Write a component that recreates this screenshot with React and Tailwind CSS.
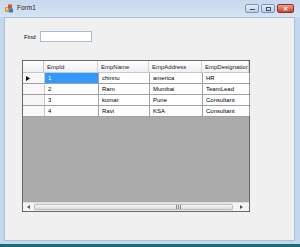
import React from "react";

const cols = [
  { name: "EmpId", w: "w-[54px]" },
  { name: "EmpName", w: "w-[51px]" },
  { name: "EmpAddress", w: "w-[53px]" },
  { name: "EmpDesignation", w: "w-[47px]" },
];

const rows = [
  ["1", "chinnu", "america", "HR"],
  ["2", "Ram", "Mumbai", "TeamLead"],
  ["3", "kumar", "Pune", "Consultant"],
  ["4", "Ravi", "KSA", "Consultant"],
];

function TitleIcon() {
  return (
    <svg width="9" height="9" viewBox="0 0 9 9">
      <rect x="0" y="3" width="4" height="5" fill="#d9a03a" />
      <rect x="3" y="0.5" width="4" height="4" fill="#e24c2f" />
      <rect x="4" y="4.5" width="4" height="4" fill="#3a78c9" />
      <rect x="1" y="4" width="2" height="2" fill="#f3d27a" />
    </svg>
  );
}

export default function App() {
  return (
    <div
      className="w-[300px] h-[247px] flex flex-col bg-[#c3d7ee] overflow-hidden"
      style={{ fontFamily: '"Liberation Sans", Arial, sans-serif' }}
    >
      {/* Title bar */}
      <div className="h-[17px] flex items-start bg-gradient-to-b from-[#c7d9ee] to-[#d5e3f3]">
        <div className="flex items-center gap-[3px] pl-[5px] pt-[4px]">
          <TitleIcon />
          <span className="text-[6.5px] text-[#1e1e1e] leading-none">Form1</span>
        </div>
        <div className="flex-1" />
        <div className="flex gap-[2px] pt-[4px] pr-[6px]">
          <div className="w-[14px] h-[9px] rounded-[2px] border border-[#7d94b3] bg-gradient-to-b from-[#e6eef8] to-[#b9cbe3] flex items-end justify-center pb-[2px]">
            <div className="w-[5px] h-[1.5px] bg-[#3b4f6b]" />
          </div>
          <div className="w-[14px] h-[9px] rounded-[2px] border border-[#7d94b3] bg-gradient-to-b from-[#e6eef8] to-[#b9cbe3] flex items-center justify-center">
            <div className="w-[5px] h-[4px] border border-[#3b4f6b]" />
          </div>
          <div className="w-[17px] h-[9px] rounded-[2px] border border-[#8a3028] bg-gradient-to-b from-[#e9a08f] to-[#c9412c] flex items-center justify-center text-white text-[6px] font-bold leading-none">
            ✕
          </div>
        </div>
      </div>

      {/* Frame body */}
      <div className="flex-1 flex pl-[4px] pr-[5px] pb-[3px]">
        <div className="flex-1 bg-[#f0f0f0] border border-[#aebfd6] flex flex-col pl-[17px] pt-[13px]">
          {/* Find row */}
          <div className="flex items-center h-[11px]">
            <span className="text-[6px] text-black leading-none ml-[2px] w-[16px]">Find</span>
            <div className="w-[52px] h-[11px] bg-white border border-[#a9bcd3]" />
          </div>

          {/* Grid */}
          <div className="mt-[18px] w-[228px] h-[152px] border border-[#696969] bg-[#ababab] flex flex-col">
            {/* Header */}
            <div className="flex h-[12px] bg-gradient-to-b from-[#ffffff] to-[#eef0f3] border-b border-[#c8c8c8]">
              <div className="w-[22px] border-r border-[#c8c8c8]" />
              {cols.map((c) => (
                <div
                  key={c.name}
                  className={`${c.w} shrink-0 border-r border-[#d5d5d5] flex items-center pl-[3px] text-[6px] text-[#1a1a1a] leading-none whitespace-nowrap overflow-hidden`}
                >
                  {c.name}
                </div>
              ))}
            </div>
            {/* Rows */}
            {rows.map((r, i) => (
              <div key={i} className="flex h-[11px] bg-white border-b border-[#a0a0a0]">
                <div className="w-[22px] shrink-0 bg-[#f7f7f7] border-r border-[#c8c8c8] flex items-center pl-[3px]">
                  {i === 0 && (
                    <svg width="4" height="5" viewBox="0 0 4 5">
                      <path d="M0 0 L4 2.5 L0 5 Z" fill="#000" />
                    </svg>
                  )}
                </div>
                {r.map((v, j) => (
                  <div
                    key={j}
                    className={`${cols[j].w} shrink-0 border-r border-[#a0a0a0] flex items-center pl-[3px] text-[6px] leading-none whitespace-nowrap overflow-hidden ${
                      i === 0 && j === 0 ? "bg-[#3399ff] text-white" : "text-black"
                    }`}
                  >
                    {v}
                  </div>
                ))}
              </div>
            ))}
            <div className="flex-1" />
            {/* Scrollbar */}
            <div className="h-[9px] flex bg-[#e8e8e8] border-t border-[#dcdcdc]">
              <div className="w-[11px] flex items-center justify-center bg-[#f4f4f4]">
                <svg width="3" height="4" viewBox="0 0 3 4">
                  <path d="M3 0 L0 2 L3 4 Z" fill="#555" />
                </svg>
              </div>
              <div className="w-[199px] my-[1px] rounded-[2px] border border-[#bdbdbd] bg-gradient-to-b from-[#f6f6f6] to-[#dcdcdc] flex items-center justify-center">
                <div className="flex gap-[1px] ml-[90px]">
                  <div className="w-[1px] h-[4px] bg-[#888]" />
                  <div className="w-[1px] h-[4px] bg-[#888]" />
                  <div className="w-[1px] h-[4px] bg-[#888]" />
                </div>
              </div>
              <div className="flex-1 flex items-center justify-center bg-[#f4f4f4]">
                <svg width="3" height="4" viewBox="0 0 3 4">
                  <path d="M0 0 L3 2 L0 4 Z" fill="#555" />
                </svg>
              </div>
            </div>
          </div>
        </div>
      </div>
      <div className="h-[3px] bg-[#1e6a78]" />
    </div>
  );
}
